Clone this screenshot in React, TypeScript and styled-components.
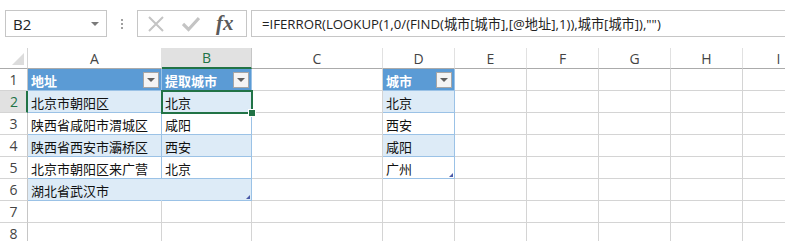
import React from 'react';
import styled, { createGlobalStyle } from 'styled-components';

const GlobalStyle = createGlobalStyle`
  body {
    margin: 0;
    background: #ffffff;
    font-family: "Noto Sans", "Noto Sans CJK SC", sans-serif;
    overflow: hidden;
  }
`;

const GREEN = '#217346';
const TABLE_LINE = '#9bc2e6';

const Page = styled.div`
  width: 785px;
  height: 241px;
  overflow: hidden;
  background: #fff;
`;

/* ---------- formula bar ---------- */
const TopBar = styled.div`
  display: flex;
  align-items: flex-start;
  height: 48px;
  box-sizing: border-box;
  padding: 10px 0 0 5px;
`;

const NameBox = styled.div`
  width: 102px;
  height: 27px;
  box-sizing: border-box;
  border: 1px solid #c6c6c6;
  display: flex;
  align-items: center;
  justify-content: space-between;
  padding: 0 7px 0 7px;
  font-family: "Open Sans", "Liberation Sans", sans-serif;
  font-size: 15px;
  color: #222;
`;

const DropArrow = styled.span`
  width: 0;
  height: 0;
  border-left: 4px solid transparent;
  border-right: 4px solid transparent;
  border-top: 4px solid #7a7a7a;
`;

const Grip = styled.div`
  width: 30px;
  height: 27px;
  display: flex;
  flex-direction: column;
  align-items: center;
  justify-content: center;
  gap: 2px;
  span {
    width: 2px;
    height: 2px;
    background: #a0a0a0;
  }
`;

const FxBox = styled.div`
  width: 110px;
  height: 27px;
  box-sizing: border-box;
  border: 1px solid #c6c6c6;
  display: flex;
  align-items: center;
  padding-left: 9px;
  gap: 17px;
`;

const FxLabel = styled.span`
  font-family: "Liberation Serif", serif;
  font-style: italic;
  font-weight: bold;
  font-size: 21px;
  color: #5a5a5a;
  line-height: 1;
  margin-left: -1px;
`;

const FormulaBox = styled.div`
  flex: 1;
  margin-left: 4px;
  height: 27px;
  box-sizing: border-box;
  border: 1px solid #c6c6c6;
  border-right: none;
  display: flex;
  align-items: center;
  padding-left: 10px;
  font-family: "Open Sans", "Noto Sans CJK SC", sans-serif;
  font-size: 13.2px;
  color: #222;
  white-space: nowrap;
`;

/* ---------- sheet ---------- */
const Sheet = styled.div`
  position: relative;
  width: 815px;
  display: grid;
  grid-template-columns: 28px 134px 90px 131px repeat(6, 72px);
  grid-template-rows: 21px repeat(8, 22px);
`;

const Corner = styled.div`
  position: relative;
  box-sizing: border-box;
  border-right: 1px solid #d4d4d4;
  border-bottom: 1px solid #ababab;
  &::after {
    content: '';
    position: absolute;
    right: 3px;
    bottom: 3px;
    width: 0;
    height: 0;
    border-left: 12px solid transparent;
    border-bottom: 12px solid #dcdcdc;
  }
`;

const ColHead = styled.div<{ $selected?: boolean }>`
  box-sizing: border-box;
  display: flex;
  align-items: center;
  justify-content: center;
  background: ${(p) => (p.$selected ? '#e1e1e1' : '#ffffff')};
  border-right: 1px solid ${(p) => (p.$selected ? '#c6c6c6' : '#e1e1e1')};
  border-bottom: ${(p) => (p.$selected ? `2px solid ${GREEN}` : '1px solid #ababab')};
  font-family: "Open Sans", "Liberation Sans", sans-serif;
  font-size: 14px;
  color: ${(p) => (p.$selected ? GREEN : '#444')};
`;

const RowHead = styled.div<{ $selected?: boolean }>`
  box-sizing: border-box;
  display: flex;
  align-items: center;
  justify-content: center;
  background: ${(p) => (p.$selected ? '#e1e1e1' : '#ffffff')};
  border-right: ${(p) => (p.$selected ? `2px solid ${GREEN}` : '1px solid #c6c6c6')};
  border-bottom: 1px solid #d4d4d4;
  font-family: "Open Sans", "Liberation Sans", sans-serif;
  font-size: 14px;
  padding-left: ${(p) => (p.$selected ? '2px' : '0')};
  color: ${(p) => (p.$selected ? GREEN : '#444')};
`;

type Tone = 'none' | 'head' | 'band' | 'plain';

const toneBg: Record<Tone, string> = {
  none: '#ffffff',
  head: '#5b9bd5',
  band: '#ddebf7',
  plain: '#ffffff',
};

const Cell = styled.div<{ $tone?: Tone; $open?: boolean }>`
  position: relative;
  box-sizing: border-box;
  display: flex;
  align-items: center;
  justify-content: space-between;
  padding: 1px 2px 0 3px;
  white-space: nowrap;
  overflow: ${(p) => (p.$open ? 'visible' : 'hidden')};
  z-index: ${(p) => (p.$open ? 1 : 0)};
  background: ${(p) => toneBg[p.$tone ?? 'none']};
  border-right: ${(p) =>
    p.$open ? `1px solid ${toneBg[p.$tone ?? 'none']}` : `1px solid ${p.$tone && p.$tone !== 'none' ? TABLE_LINE : '#d4d4d4'}`};
  border-bottom: 1px solid ${(p) => (p.$tone && p.$tone !== 'none' ? TABLE_LINE : '#d4d4d4')};
  font-family: "Noto Sans CJK SC", sans-serif;
  font-size: 13px;
  font-weight: ${(p) => (p.$tone === 'head' ? 700 : 400)};
  color: ${(p) => (p.$tone === 'head' ? '#ffffff' : '#111')};
`;

const FilterButton = styled.span`
  width: 16px;
  height: 16px;
  box-sizing: border-box;
  background: #f4f4f4;
  border: 1px solid #a6a6a6;
  display: flex;
  align-items: center;
  justify-content: center;
  margin-top: -1px;
  &::after {
    content: '';
    width: 0;
    height: 0;
    border-left: 4px solid transparent;
    border-right: 4px solid transparent;
    border-top: 4px solid #5f5f5f;
  }
`;

const ResizeMark = styled.span`
  position: absolute;
  right: 1px;
  bottom: 1px;
  width: 0;
  height: 0;
  border-left: 4px solid transparent;
  border-bottom: 4px solid #4a5aa8;
`;

const Selection = styled.div`
  position: absolute;
  left: 161px;
  top: 42px;
  width: 92px;
  height: 24px;
  box-sizing: border-box;
  border: 2px solid ${GREEN};
  pointer-events: none;
  z-index: 2;
`;

const FillHandle = styled.span`
  position: absolute;
  right: -5px;
  bottom: -5px;
  width: 6px;
  height: 6px;
  background: ${GREEN};
  border: 1px solid #fff;
`;

const XIcon = () => (
  <svg width="18" height="16" viewBox="0 0 18 16">
    <path d="M2 1 L16 15 M16 1 L2 15" stroke="#c4c4c4" strokeWidth="2" fill="none" />
  </svg>
);

const CheckIcon = () => (
  <svg width="18" height="16" viewBox="0 0 18 16">
    <path d="M1 8 L6.5 13.5 L17 2" stroke="#c4c4c4" strokeWidth="3.2" fill="none" />
  </svg>
);

const columns = ['A', 'B', 'C', 'D', 'E', 'F', 'G', 'H', 'I'];

type CellDef = { text?: string; tone?: Tone; filter?: boolean; resize?: boolean; open?: boolean };

const rows: CellDef[][] = [
  [
    { text: '地址', tone: 'head', filter: true },
    { text: '提取城市', tone: 'head', filter: true },
    {},
    { text: '城市', tone: 'head', filter: true },
  ],
  [{ text: '北京市朝阳区', tone: 'band' }, { text: '北京', tone: 'band' }, {}, { text: '北京', tone: 'band' }],
  [{ text: '陕西省咸阳市渭城区', tone: 'plain' }, { text: '咸阳', tone: 'plain' }, {}, { text: '西安', tone: 'plain' }],
  [{ text: '陕西省西安市灞桥区', tone: 'band' }, { text: '西安', tone: 'band' }, {}, { text: '咸阳', tone: 'band' }],
  [{ text: '北京市朝阳区来广营', tone: 'plain' }, { text: '北京', tone: 'plain' }, {}, { text: '广州', tone: 'plain', resize: true }],
  [{ text: '湖北省武汉市', tone: 'band', open: true }, { tone: 'band', resize: true }, {}, {}],
  [],
  [],
];

const App = () => {
  return (
    <Page>
      <GlobalStyle />
      <TopBar>
        <NameBox>
          <span>B2</span>
          <DropArrow />
        </NameBox>
        <Grip>
          <span />
          <span />
          <span />
        </Grip>
        <FxBox>
          <XIcon />
          <CheckIcon />
          <FxLabel>fx</FxLabel>
        </FxBox>
        <FormulaBox>=IFERROR(LOOKUP(1,0/(FIND(城市[城市],[@地址],1)),城市[城市]),"")</FormulaBox>
      </TopBar>

      <Sheet>
        <Corner />
        {columns.map((c) => (
          <ColHead key={c} $selected={c === 'B'}>
            {c}
          </ColHead>
        ))}

        {rows.map((row, r) => (
          <React.Fragment key={r}>
            <RowHead $selected={r === 1}>{r + 1}</RowHead>
            {columns.map((c, ci) => {
              const def = row[ci] ?? {};
              return (
                <Cell key={c} $tone={def.tone} $open={def.open}>
                  <span>{def.text}</span>
                  {def.filter && <FilterButton />}
                  {def.resize && <ResizeMark />}
                </Cell>
              );
            })}
          </React.Fragment>
        ))}

        <Selection>
          <FillHandle />
        </Selection>
      </Sheet>
    </Page>
  );
};

export default App;
